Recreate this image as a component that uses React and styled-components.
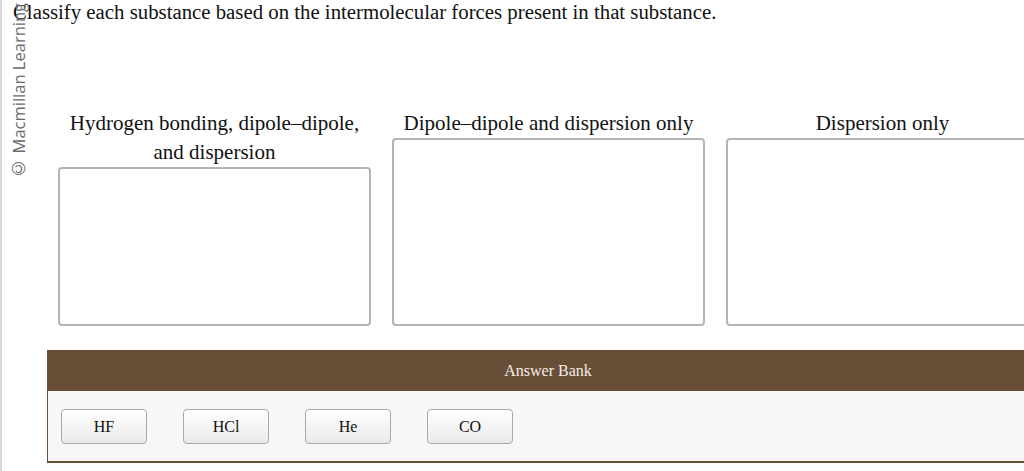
import React from "react";
import styled, { createGlobalStyle } from "styled-components";

const GlobalStyle = createGlobalStyle`
  html, body {
    margin: 0;
    padding: 0;
    background: #fff;
    overflow: hidden;
  }
`;

const columns = [
  { label: ["Hydrogen bonding, dipole–dipole,", "and dispersion"] },
  { label: ["Dipole–dipole and dispersion only"] },
  { label: ["Dispersion only"] },
];

const answers = ["HF", "HCl", "He", "CO"];

const App = () => {
  return (
    <>
      <GlobalStyle />
      <Page>
        <Watermark>
          <CopySign>©</CopySign> Macmillan Learning
        </Watermark>
        <Title>
          Classify each substance based on the intermolecular forces present in that substance.
        </Title>
        <Columns>
          {columns.map((col, i) => (
            <Column key={i}>
              <Label>
                {col.label.map((line, j) => (
                  <div key={j}>{line}</div>
                ))}
              </Label>
              <DropBox />
            </Column>
          ))}
        </Columns>
        <Bank>
          <BankHeader>Answer Bank</BankHeader>
          <BankBody>
            {answers.map((a) => (
              <Chip key={a}>{a}</Chip>
            ))}
          </BankBody>
        </Bank>
      </Page>
    </>
  );
};

const Page = styled.div`
  position: relative;
  width: 1024px;
  height: 471px;
  overflow: hidden;
  box-sizing: border-box;
  border-left: 2px solid #d9d9d9;
  font-family: "Liberation Serif", "Times New Roman", serif;
  color: #111;
`;

const Watermark = styled.div`
  position: absolute;
  left: 7px;
  top: 3px;
  writing-mode: vertical-rl;
  transform: rotate(180deg);
  font-family: "Open Sans", "Noto Sans", sans-serif;
  font-size: 16.5px;
  line-height: 20px;
  color: #6a6a6a;
  white-space: nowrap;
`;

const CopySign = styled.span`
  font-family: "Liberation Sans", sans-serif;
  font-size: 19px;
  font-weight: 300;
`;

const Title = styled.div`
  padding: 0 0 0 11px;
  font-size: 20.8px;
  line-height: 24px;
  white-space: nowrap;
`;

const Columns = styled.div`
  display: flex;
  align-items: stretch;
  gap: 21px;
  margin-top: 85px;
  padding-left: 56px;
`;

const Column = styled.div`
  flex: 0 0 313px;
  display: flex;
  flex-direction: column;
`;

const Label = styled.div`
  font-size: 21px;
  line-height: 29px;
  text-align: center;
  white-space: nowrap;
`;

const DropBox = styled.div`
  box-sizing: border-box;
  flex: 1;
  min-height: 159px;
  border: 2px solid #b4b4b4;
  border-radius: 4px;
  background: #fff;
`;

const Bank = styled.div`
  width: 1002px;
  margin: 24px 0 0 45px;
`;

const BankHeader = styled.div`
  height: 41px;
  line-height: 41px;
  background: #694e37;
  color: #f4ede6;
  font-size: 16px;
  text-align: center;
`;

const BankBody = styled.div`
  box-sizing: border-box;
  height: 72px;
  display: flex;
  align-items: flex-start;
  gap: 36px;
  padding: 18px 0 0 13px;
  background: #f7f7f7;
  border-left: 1px solid #6b5039;
  border-bottom: 2px solid #6b5039;
`;

const Chip = styled.div`
  box-sizing: border-box;
  width: 86px;
  height: 35px;
  line-height: 33px;
  text-align: center;
  font-size: 16px;
  border: 1px solid #a9a9a9;
  border-radius: 4px;
  background: linear-gradient(#ffffff, #e9e9e9);
  color: #111;
`;

export default App;
